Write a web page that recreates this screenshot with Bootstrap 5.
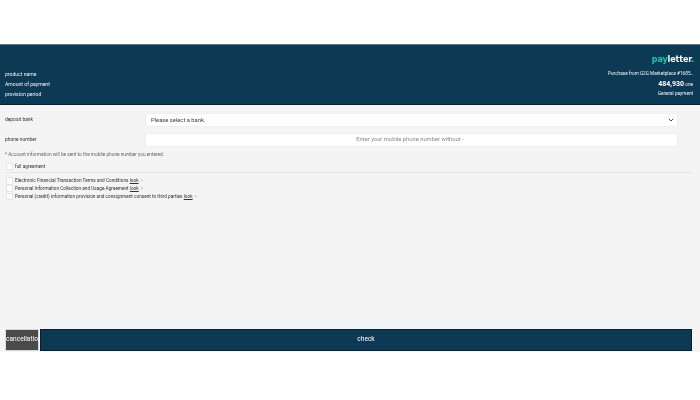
<!DOCTYPE html>
<html lang="en"><head><meta charset="utf-8"><title>Payment</title>
<link rel="stylesheet" href="https://cdn.jsdelivr.net/npm/bootstrap@5.3.0/dist/css/bootstrap.min.css">
<style>
html,body{height:400px;overflow:hidden;background:#fff}
body{font-family:Roboto,"Liberation Sans",sans-serif;font-size:5.1px;line-height:1.2;color:#333;padding-top:44px}
.pay-shell{height:308px;background:#f4f4f4;filter:blur(.22px)}
.pay-head{height:61px;background:#0c3a54;color:#f0f4f6;border-top:1px solid #5d7888;border-bottom:1px solid #06202f;padding:8px 7px 0 5px}
.pay-logo{font-family:"DejaVu Sans",sans-serif;font-size:8px;line-height:13px;font-weight:700;color:#fff;letter-spacing:-.1px;margin:0 -1px 2.5px 0}
.pay-logo span{color:#19c8b8}
.pay-line{height:10.3px;line-height:10.3px}
.pay-end{font-size:4.7px}
.pay-amt{font-size:7px;font-weight:700;color:#fff}
.pay-form{padding:8px 8px 0 5px}
.pay-row{height:14px;margin-bottom:5.5px}
.pay-lbl{width:140px;flex:none;font-size:4.9px}
.pay-field{width:533px;height:14px;background:#fff;border:1px solid #eee;color:#444;font-size:5.8px;padding:0 3px 0 5px}
.pay-field.pay-ph{color:#888;padding-right:8px}
.pay-note{color:#666;font-size:4.75px;margin:1px 0 6px}
.pay-box{width:6.5px;height:7.6px;background:#fff;border:1px solid #e6e6e6;flex:none;margin:0 2.5px 0 1px}
.pay-check{height:7.8px;color:#333;font-size:4.72px}
.pay-check a{color:#333;text-decoration-thickness:.4px;text-underline-offset:.8px}
.pay-gt{color:#aaa;margin-left:2px}
.pay-rule{border-top:1px solid #e6e6e6;margin:2px 0 3.5px;width:687px}
.pay-tight{margin-top:-1px}
.pay-actions{height:22px;margin:0 8px 1px 5px;gap:1px}
.pay-actions button{border:1px solid #d5dbe0;border-radius:0;color:#fff;padding:0;overflow:hidden;white-space:nowrap}
.pay-actions button.pay-cancel{width:34px;background:#4a4a4a;font-size:6.6px;color:#fff}
.pay-actions button.pay-ok{flex:1;background:#0c3a54;font-size:6.6px;color:#fff;border-color:#06202f}
.pay-space{flex:1}
</style></head>
<body>
<div class="pay-shell d-flex flex-column">
<header class="pay-head">
  <div class="pay-logo text-end"><span>pay</span>letter<span>.</span></div>
  <div class="d-flex justify-content-between pay-line"><span>product name</span><span class="pay-end">Purchase from G2G Marketplace #1685..</span></div>
  <div class="d-flex justify-content-between pay-line"><span>Amount of payment</span><span class="pay-end"><span class="pay-amt">484,930</span> one</span></div>
  <div class="d-flex justify-content-between pay-line"><span>provision period</span><span class="pay-end">General payment</span></div>
</header>
<main class="pay-form">
  <div class="d-flex align-items-center pay-row"><div class="pay-lbl">deposit bank</div>
    <div class="pay-field d-flex align-items-center justify-content-between"><span>Please select a bank.</span>
      <svg width="6" height="4" viewBox="0 0 6 4" aria-hidden="true"><path d="M.7.7 3 3l2.3-2.3" fill="none" stroke="#555" stroke-width="1"/></svg></div></div>
  <div class="d-flex align-items-center pay-row"><div class="pay-lbl">phone number</div>
    <div class="pay-field pay-ph d-flex align-items-center justify-content-center">Enter your mobile phone number without -</div></div>
  <div class="pay-note">* Account information will be sent to the mobile phone number you entered.</div>
  <div class="d-flex align-items-center pay-check pay-tight"><span class="pay-box"></span>full agreement</div>
  <div class="pay-rule"></div>
  <div class="d-flex align-items-center pay-check"><span class="pay-box"></span>Electronic Financial Transaction Terms and Conditions&nbsp;<a href="#">look</a><span class="pay-gt">&gt;</span></div>
  <div class="d-flex align-items-center pay-check"><span class="pay-box"></span>Personal Information Collection and Usage Agreement&nbsp;<a href="#">look</a><span class="pay-gt">&gt;</span></div>
  <div class="d-flex align-items-center pay-check"><span class="pay-box"></span>Personal (credit) information provision and consignment consent to third parties&nbsp;<a href="#">look</a><span class="pay-gt">&gt;</span></div>
</main>
<div class="pay-space"></div>
<div class="d-flex pay-actions"><button class="btn pay-cancel">cancellatio</button><button class="btn pay-ok">check</button></div>
</div>
</body></html>
